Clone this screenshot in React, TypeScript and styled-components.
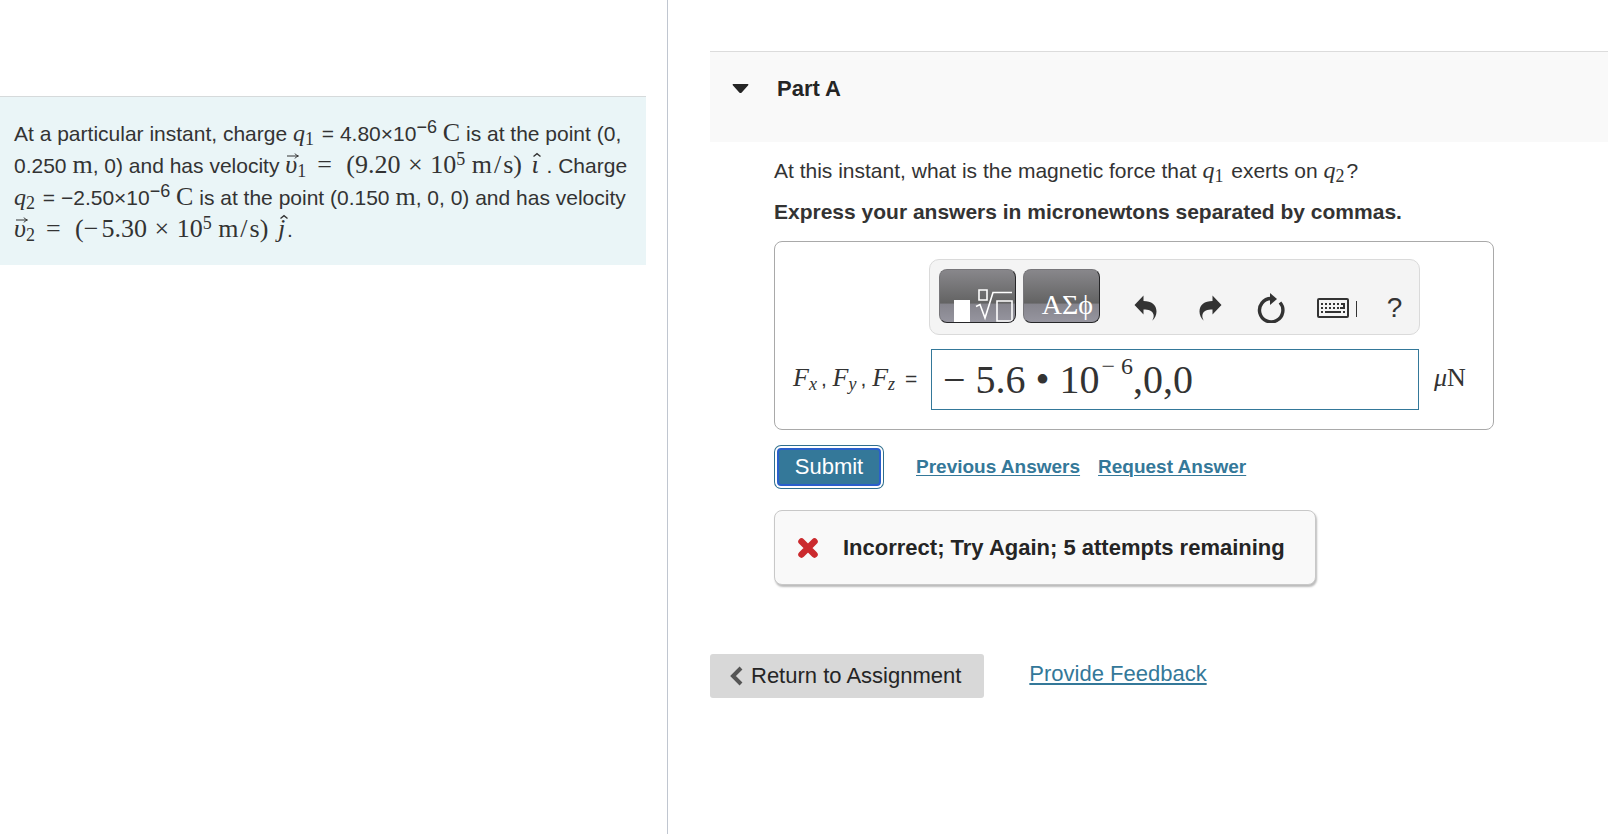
import React from "react";
import styled, { createGlobalStyle } from "styled-components";

const GlobalStyle = createGlobalStyle`
  *, *::before, *::after { box-sizing: border-box; }
  body {
    margin: 0;
    background: #fff;
    color: #333;
    font-family: "Liberation Sans", Arial, sans-serif;
    font-size: 21px;
  }
  p, h2 { margin: 0; }
  button, input { font: inherit; color: inherit; }
`;

const Page = styled.div`
  display: grid;
  grid-template-columns: minmax(0, 668fr) minmax(0, 940fr);
  min-height: 100vh;
`;

const ProblemPane = styled.aside`
  border-right: 1px solid #c0c6d0;
  padding: 96px 21px 0 0;
`;

const ProblemCard = styled.section`
  background: #eaf5f7;
  border-top: 1px solid #d6dadb;
  padding: 21px 14px 19px;
  line-height: 32px;
`;

const PartPane = styled.main`
  padding: 51px 0 40px 42px;
`;

const PartHeader = styled.header`
  display: flex;
  gap: 28px;
  height: 91px;
  padding: 23px 22px;
  border-top: 1px solid #dcdcdc;
  background: #f9f9f9;
`;

const CollapseButton = styled.button`
  display: flex;
  align-items: center;
  width: 17px;
  height: 28px;
  padding: 0;
  border: 0;
  background: none;
`;

const PartTitle = styled.h2`
  color: #252525;
  font-size: 22px;
  line-height: 28px;
`;

const PartBody = styled.div`
  padding: 17px 20px 0 64px;
`;

const Question = styled.p`
  line-height: 24px;
`;

const Instruction = styled.p`
  margin-top: 17px;
  font-weight: bold;
  line-height: 24px;
`;

const MathText = styled.span`
  font-family: "Liberation Serif", "Times New Roman", serif;
  font-size: 26px;
  line-height: 1px;
  white-space: nowrap;
`;

const QuantityText = styled(MathText)`
  font-size: ${(p: { $small?: boolean }) => (p.$small ? "24px" : "26px")};
  margin-right: ${(p: { $small?: boolean }) => (p.$small ? "2px" : "4px")};
`;

const Variable = styled.i`
  position: relative;
`;

const Sub = styled.sub`
  font-size: 18px;
  font-style: ${(p: { $italic?: boolean }) => (p.$italic ? "italic" : "normal")};
  line-height: 1px;
  vertical-align: -4px;
`;

const Sup = styled.sup`
  font-size: 18px;
  line-height: 1px;
  vertical-align: 8px;
`;

const Relation = styled.span`
  margin: 0 8px 0 11px;
`;

const Operator = styled.span`
  margin: 0 1px;
`;

const Minus = styled.span`
  margin-right: 3px;
`;

const Slash = styled.span`
  margin: 0 2px;
`;

const Direction = styled.span`
  margin: 0 2px 0 3px;
`;

const AccentSvg = styled.svg`
  position: absolute;
  left: 2px;
  top: ${(p: { $drop: number }) => p.$drop}px;
  overflow: visible;
`;

const AnswerBox = styled.form`
  display: grid;
  grid-template-columns: 136px minmax(0, 1fr) 57px;
  align-items: center;
  row-gap: 14px;
  max-width: 720px;
  margin-top: 17px;
  padding: 17px 16px 19px 18px;
  border: 1px solid #a9a9a9;
  border-radius: 8px;
`;

const Toolbar = styled.div`
  grid-column: 2;
  display: flex;
  align-items: flex-start;
  height: 76px;
  padding: 9px 0 9px 9px;
  border: 1px solid #dadada;
  border-radius: 10px;
  background: #f4f4f4;
`;

const PaletteButton = styled.button`
  display: flex;
  justify-content: flex-end;
  align-items: flex-end;
  flex: none;
  width: 77px;
  height: 54px;
  margin-right: 7px;
  padding: 0 ${(p: { $inset: number }) => p.$inset}px 0 0;
  overflow: hidden;
  border: 1px solid #77767a;
  border-right-color: #262628;
  border-bottom-color: #262628;
  border-radius: 8px;
  background: linear-gradient(#88878b 0, #636363 64%, #85848c 65%, #96959f 100%);
  color: #fff;
  font-family: "Liberation Serif", "Times New Roman", serif;
  font-size: 28px;
  line-height: 34px;
`;

const ToolButton = styled.button`
  display: flex;
  align-items: center;
  justify-content: center;
  flex: ${(p: { $grow: number }) => p.$grow} 1 0;
  gap: 7px;
  height: 34px;
  margin-top: 22px;
  padding: 0;
  border: 0;
  background: none;
  font-size: 28px;
  line-height: 34px;
`;

const Tick = styled.span`
  width: 1px;
  height: 16px;
  margin-top: 2px;
  background: #333;
`;

const AnswerLabel = styled.label`
  grid-column: 1;
  line-height: 24px;
  padding-bottom: 2px;
  white-space: nowrap;
`;

const MathField = styled.div`
  display: flex;
  align-items: center;
  height: 61px;
  margin: 0 1px 0 2px;
  padding: 0 11px;
  border: 1px solid #347899;
  background: #fff;
`;

const FieldPart = styled.input`
  field-sizing: content;
  min-width: 0;
  height: 46px;
  padding: 0;
  border: 0;
  outline: 0;
  background: none;
  font-family: "Liberation Serif", "Times New Roman", serif;
  font-size: 40px;
`;

const ExponentPart = styled(FieldPart)`
  height: 30px;
  margin: 0 0 26px 2px;
  font-size: 24px;
`;

const Unit = styled.span`
  padding: 0 0 2px 14px;
  line-height: 24px;
`;

const Actions = styled.div`
  display: flex;
  align-items: center;
  margin-top: 15px;
`;

const SubmitButton = styled.button`
  width: 104px;
  height: 38px;
  margin: 3px 35px 3px 3px;
  padding: 0;
  border: 2px solid #2a5fcb;
  border-radius: 4px;
  background: #347899;
  box-shadow: 0 0 0 2px #fff, 0 0 0 3px #2f6f8e;
  color: #fff;
  font-size: 22px;
  line-height: 34px;
`;

const TextLink = styled.a`
  color: #347899;
  font-size: 19px;
  font-weight: bold;
  text-decoration-thickness: 1px;
  text-underline-offset: 2px;
  line-height: 28px;
  margin-right: 18px;
`;

const FeedbackLink = styled(TextLink)`
  margin: 0 0 4px;
  font-size: 22px;
  font-weight: normal;
  text-decoration-thickness: 2px;
`;

const Feedback = styled.div`
  display: flex;
  align-items: center;
  gap: 24px;
  width: fit-content;
  height: 75px;
  margin-top: 21px;
  padding: 0 30px 0 22px;
  border: 1px solid #c8c8c8;
  border-radius: 8px;
  background: #f9f9f9;
  box-shadow: 1px 2px 2px #bbb;
  color: #252525;
  font-size: 22px;
  font-weight: bold;
`;

const Footer = styled.footer`
  display: flex;
  align-items: center;
  gap: 45px;
  margin-top: 69px;
`;

const ReturnButton = styled.button`
  display: flex;
  align-items: center;
  gap: 8px;
  height: 44px;
  padding: 0 23px 0 20px;
  border: 0;
  border-radius: 3px;
  background: #d8d8d8;
  color: #252525;
  font-size: 22px;
`;

const Vector = ({ index }: { index: string }) => (
  <>
    <Variable>
      υ
      <AccentSvg $drop={3} width="12" height="6" viewBox="0 0 12 6" fill="none" stroke="#333">
        <path d="M0 3H11M8 0.5Q9 2.5 11.5 3Q9 3.5 8 5.5" />
      </AccentSvg>
    </Variable>
    <Sub>{index}</Sub>
  </>
);

const UnitVector = ({ letter, drop }: { letter: string; drop: number }) => (
  <Variable>
    {letter}
    <AccentSvg $drop={drop} width="8" height="4" viewBox="0 0 8 4" fill="none" stroke="#333">
      <path d="M0.5 3.5L4 0.7L7.5 3.5" strokeWidth="1.4" />
    </AccentSvg>
  </Variable>
);

const Quantity = ({ name, index }: { name: string; index: string }) => (
  <QuantityText $small={name === "q"}>
    <Variable>{name}</Variable>
    <Sub $italic={/[a-z]/.test(index)}>{index}</Sub>
  </QuantityText>
);

const Velocity = ({
  index,
  amount,
  children,
}: {
  index: string;
  amount: React.ReactNode;
  children: React.ReactNode;
}) => (
  <MathText>
    <Vector index={index} />
    <Relation>=</Relation> ({amount} <Operator>×</Operator> 10<Sup>5</Sup> m<Slash>/</Slash>s){" "}
    <Direction>{children}</Direction>
  </MathText>
);

const UndoIcon = ({ flip }: { flip?: boolean }) => (
  <svg width="23" height="26" viewBox="0 0 23 26" fill="#333" aria-hidden="true">
    <path
      transform={flip ? "translate(23 0) scale(-1 1)" : undefined}
      d="M0.5 10L9.500 0.5V6C17.500 6 22.500 10 22.500 16.500C22.500 20 21 23.500 18.200 25.700C19.500 23.500 20 21.500 19.500 19.500C18.500 15.500 14.500 14.500 9.500 14.500V19.500Z"
    />
  </svg>
);

export default function App() {
  return (
    <>
      <GlobalStyle />
      <Page>
        <ProblemPane>
          <ProblemCard>
            At a particular instant, charge <Quantity name="q" index="1" />{" "}
            = 4.80×10<Sup>−6</Sup> <MathText>C</MathText> is at the point (0, 0.250{" "}
            <MathText>m</MathText>, 0) and has velocity{" "}
            <Velocity index="1" amount="9.20">
              <UnitVector letter="ι" drop={3} />
            </Velocity>{" "}
            . Charge <Quantity name="q" index="2" /> = −2.50×10<Sup>−6</Sup>{" "}
            <MathText>C</MathText> is at the point (0.150 <MathText>m</MathText>, 0, 0) and has
            velocity{" "}
            <Velocity index="2" amount={<><Minus>−</Minus>5.30</>}>
              <UnitVector letter="j" drop={1} />
            </Velocity>
            .
          </ProblemCard>
        </ProblemPane>
        <PartPane>
          <PartHeader>
            <CollapseButton type="button" aria-label="Collapse Part A">
              <svg width="17" height="10" viewBox="0 0 17 10" fill="#252525">
                <path d="M1 0H16Q17 0.500 16 1.500L9.500 8.700Q8.500 9.500 7.500 8.700L1 1.500Q0 0.500 1 0Z" />
              </svg>
            </CollapseButton>
            <PartTitle>Part A</PartTitle>
          </PartHeader>
          <PartBody>
            <Question>
              At this instant, what is the magnetic force that <Quantity name="q" index="1" />{" "}
              exerts on <Quantity name="q" index="2" />?
            </Question>
            <Instruction>Express your answers in micronewtons separated by commas.</Instruction>
            <AnswerBox onSubmit={(e) => e.preventDefault()} id="answer">
              <Toolbar>
                <PaletteButton type="button" $inset={2} aria-label="Templates">
                  <svg width="59" height="34" viewBox="0 0 59 34" fill="none" stroke="#fff">
                    <path d="M0 12H16V34H0Z" fill="#fff" stroke="none" />
                    <path d="M25 2H33V12H25Z" strokeWidth="1.600" />
                    <path d="M22 18.500L26 16.500L31 30L39 4.500H58" strokeWidth="1.600" />
                    <path d="M43 13H58V33H43Z" strokeWidth="1.600" />
                  </svg>
                </PaletteButton>
                <PaletteButton type="button" $inset={6}>ΑΣϕ</PaletteButton>
                <ToolButton type="button" $grow={76} aria-label="Undo"><UndoIcon /></ToolButton>
                <ToolButton type="button" $grow={54} aria-label="Redo"><UndoIcon flip /></ToolButton>
                <ToolButton type="button" $grow={67} aria-label="Reset">
                  <svg width="28" height="30" viewBox="0 0 28 30" fill="none">
                    <path d="M14 5.500A11.700 11.700 0 1 0 23 9.500" stroke="#333" strokeWidth="3.400" />
                    <path d="M13 0L20 6L13 12Z" fill="#333" />
                  </svg>
                </ToolButton>
                <ToolButton type="button" $grow={66} aria-label="Keyboard shortcuts">
                  <svg width="32" height="20" viewBox="0 0 32 20" fill="none" stroke="#333">
                    <rect x="1" y="1" width="30" height="18" rx="1" strokeWidth="2" />
                    <path d="M4 6H26M4 10H24" strokeWidth="2" strokeDasharray="2 2" />
                    <path d="M27 5V10H23M4 14H6M8 14H24M26 14H28" strokeWidth="2" />
                  </svg>
                  <Tick />
                </ToolButton>
                <ToolButton type="button" $grow={49} aria-label="Help">?</ToolButton>
              </Toolbar>
              <AnswerLabel htmlFor="components">
                <Quantity name="F" index="x" />, <Quantity name="F" index="y" />,{" "}
                <Quantity name="F" index="z" /> =
              </AnswerLabel>
              <MathField>
                <FieldPart id="components" defaultValue="− 5.6 • 10" />
                <ExponentPart aria-label="Exponent" defaultValue="− 6" />
                <FieldPart aria-label="Remaining components" defaultValue=",0,0" />
              </MathField>
              <Unit>
                <MathText><Variable>μ</Variable>N</MathText>
              </Unit>
            </AnswerBox>
            <Actions>
              <SubmitButton type="submit" form="answer">Submit</SubmitButton>
              <TextLink href="#previous">Previous Answers</TextLink>
              <TextLink href="#request">Request Answer</TextLink>
            </Actions>
            <Feedback role="status">
              <svg width="22" height="22" viewBox="0 0 22 22" aria-hidden="true">
                <path d="M4.500 4.500L17.500 17.500M17.500 4.500L4.500 17.500" stroke="#cb2a2e" strokeWidth="6.500" strokeLinecap="round" />
              </svg>
              <span>Incorrect; Try Again; 5 attempts remaining</span>
            </Feedback>
          </PartBody>
          <Footer>
            <ReturnButton type="button">
              <svg width="13" height="20" viewBox="0 0 13 20" fill="none" aria-hidden="true">
                <path d="M11 2L3 10L11 18" stroke="#555" strokeWidth="4" />
              </svg>
              Return to Assignment
            </ReturnButton>
            <FeedbackLink href="#feedback">Provide Feedback</FeedbackLink>
          </Footer>
        </PartPane>
      </Page>
    </>
  );
}
